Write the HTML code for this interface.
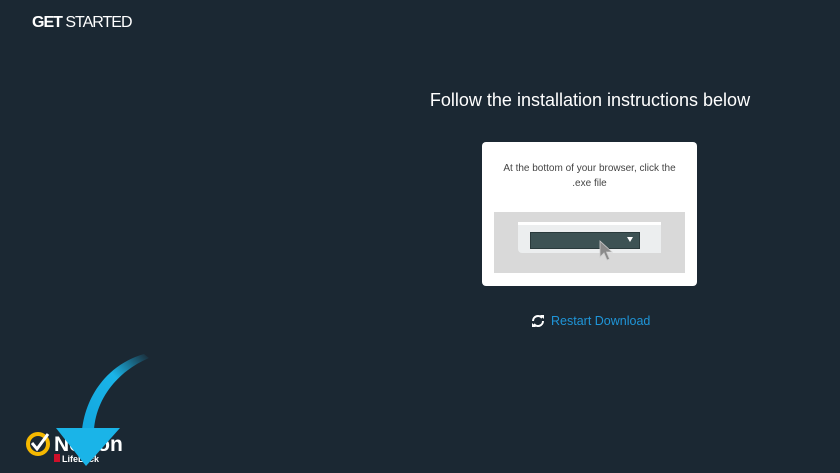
<!DOCTYPE html>
<html><head><meta charset="utf-8"><style>
html,body{margin:0;padding:0;width:840px;height:473px;overflow:hidden;background:#1b2833;font-family:"Liberation Sans",sans-serif;position:relative}
.abs{position:absolute}
</style></head><body>
<div class="abs" style="left:32px;top:14px;color:#fff;font-size:16px;letter-spacing:-1px"><b>GET</b> STARTED</div>
<div class="abs" style="left:390px;width:400px;top:90px;text-align:center;color:#fff;font-size:18px">Follow the installation instructions below</div>
<div class="abs" style="left:482px;top:142px;width:215px;height:144px;background:#fff;border-radius:4px"></div>
<div class="abs" style="left:482px;top:161px;width:215px;text-align:center;color:#444;font-size:10px;line-height:15px">At the bottom of your browser, click the<br>.exe file</div>
<div class="abs" style="left:494px;top:212px;width:191px;height:61px;background:#d9d9d9"></div>
<div class="abs" style="left:518px;top:222px;width:143px;height:31px;background:#eceeef;border-top:3px solid #fff;box-sizing:border-box;border-radius:0 0 0 4px"></div>
<div class="abs" style="left:530px;top:232px;width:110px;height:17px;background:#3d5254;border:1px solid #2a3a3c;box-sizing:border-box"></div>
<div class="abs" style="left:627px;top:237px;width:0;height:0;border-left:3.5px solid transparent;border-right:3.5px solid transparent;border-top:5px solid #fff"></div>
<svg class="abs" style="left:598px;top:240px" width="16" height="22" viewBox="0 0 16 22"><path d="M2 1 L2 17 L6 13 L9 20 L11.5 19 L8.5 12 L14 12 Z" fill="#8a8a8a" stroke="#ccc" stroke-width="0.8"/></svg>
<svg class="abs" style="left:530px;top:313px" width="16" height="16" viewBox="0 0 16 16"><path d="M3 8 A5 5 0 0 1 12 5" fill="none" stroke="#fff" stroke-width="2"/><path d="M13 8 A5 5 0 0 1 4 11" fill="none" stroke="#fff" stroke-width="2"/><path d="M10 2 L14 2 L14 6 Z" fill="#fff"/><path d="M6 14 L2 14 L2 10 Z" fill="#fff"/></svg>
<div class="abs" style="left:551px;top:314px;color:#1f95d8;font-size:12.5px">Restart Download</div>
<svg class="abs" style="left:24px;top:350px" width="130" height="123" viewBox="0 0 130 123">
<defs><linearGradient id="g" x1="1" y1="0" x2="0" y2="1"><stop offset="0" stop-color="#1ab4e8" stop-opacity="0"/><stop offset="0.4" stop-color="#1ab4e8"/><stop offset="1" stop-color="#12a6de"/></linearGradient></defs>
<circle cx="14" cy="94" r="10" fill="none" stroke="#f5b800" stroke-width="4"/>
<path d="M8 93 L13 99 L24 84" fill="none" stroke="#fff" stroke-width="3"/>
<text x="30" y="101" fill="#fff" font-size="21" font-weight="bold" font-family="Liberation Sans">Norton</text>
<rect x="30" y="104" width="6" height="8" fill="#d0102a"/>
<text x="38" y="112" fill="#fff" font-size="9" font-weight="bold" font-family="Liberation Sans">LifeLock</text>
<path d="M120 4 C85 14 62 44 58 80 L70 80 C72 50 92 22 125 8 Z" fill="url(#g)"/>
<path d="M32 78 L96 78 L62 116 Z" fill="#1ab4e8"/>
</svg>
</body></html>
